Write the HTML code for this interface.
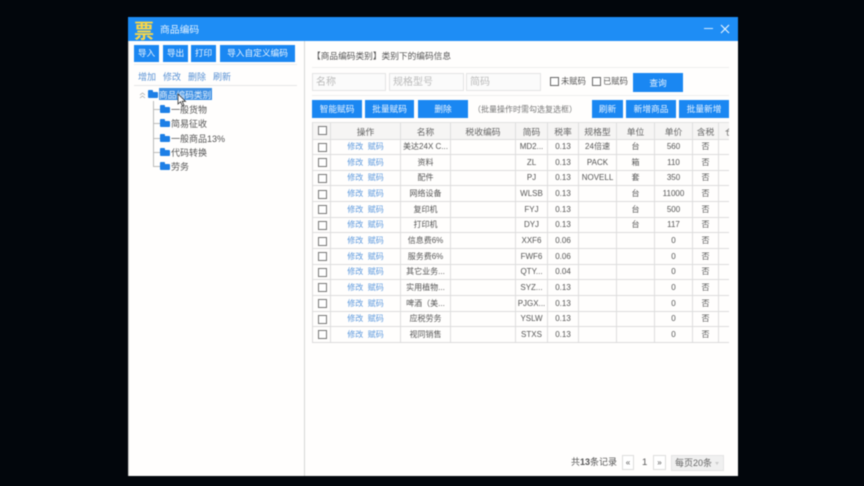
<!DOCTYPE html>
<html lang="zh"><head><meta charset="utf-8"><title>商品编码</title>
<style>
*{box-sizing:border-box}
html,body{margin:0;padding:0;width:864px;height:486px;overflow:hidden;background:#02060c}
body{font-family:"Liberation Sans","Noto Sans CJK SC",sans-serif;font-size:9px;color:#555}
#w{position:absolute;left:128px;top:17px;width:610px;height:459px;background:#fffefd;filter:blur(.45px);overflow:hidden}
.a{position:absolute;white-space:nowrap}
.b{position:absolute;background:#1a87f2;color:#e8f3fe;text-align:center;font-size:8.7px;white-space:nowrap}
.l{color:#5b98dd}
.r{position:absolute;left:184px;width:417px;display:flex;border-bottom:1px solid #dcdcdc;border-left:1px solid #dcdcdc;color:#555;line-height:16px;height:16px}
.r>span{display:block;flex:none;text-align:center;border-right:1px solid #dedede;overflow:hidden;white-space:nowrap;font-size:8px}
.r>span:last-child{border-right:0}
.c1{width:18px}.c2{width:70px}.c3{width:50px}.c4{width:65px}.c5{width:32px}.c6{width:31px}.c7{width:38px}.c8{width:38px}.c9{width:38px}.c10{width:26px}.c11{width:10px}
.cb{display:block;width:9px;height:9px;border:1px solid #777;background:#fff;margin:3.500px 0 0 5px}
.h{background:#f6f5f4;color:#666;height:18px;line-height:18px;border-top:1px solid #e2e2e2}
.h>span{font-size:8.800px}
.h>.c11{text-align:left;padding-left:6px}
.inp{position:absolute;top:56px;height:18px;border:1px solid #e4e4e4;background:#fbfbfb;color:#bbb;font-size:10px;line-height:18px;padding-left:3px}
.t{position:absolute;font-size:9px;color:#555;white-space:nowrap;line-height:13px}
.fd{position:absolute;width:10px;height:6px;background:#1d7fe6;border-radius:1px}
.fd:before{content:"";position:absolute;left:0;top:-2px;width:5px;height:3px;background:#1d7fe6;border-radius:1px 1px 0 0}
.g{position:absolute;background:#bbb}
.sq{position:absolute;width:9px;height:9px;border:1px solid #666;background:#fff}
</style></head><body>
<div id="w">
<div class="a" style="left:0;top:0;width:610px;height:24px;background:#1e8df5"></div>
<div class="a" style="left:6px;top:3px;width:20px;height:20px;color:#f7d64a;font-size:20px;line-height:20px;font-weight:bold;text-align:center;font-family:'Noto Sans CJK SC',sans-serif">票</div>
<div class="a" style="left:32px;top:7px;color:#e4f1fe;font-size:9.800px;line-height:13px">商品编码</div>
<div class="a" style="left:576px;top:11px;width:9px;height:1px;background:#cfe6fd"></div>
<svg class="a" style="left:592px;top:7px" width="10" height="10"><path d="M1 1L9 9M9 1L1 9" stroke="#e6f3fe" stroke-width="1.2"/></svg>
<div class="a" style="left:0;top:24px;width:1px;height:435px;background:#ccc"></div>
<div class="a" style="left:176px;top:24px;width:1px;height:435px;background:#d6d6d6"></div>

<div class="b" style="left:6px;top:28px;width:25px;height:17px;line-height:17px">导入</div>
<div class="b" style="left:35px;top:28px;width:25px;height:17px;line-height:17px">导出</div>
<div class="b" style="left:63px;top:28px;width:25px;height:17px;line-height:17px">打印</div>
<div class="b" style="left:92px;top:28px;width:75px;height:17px;line-height:17px">导入自定义编码</div>
<div class="a" style="left:6px;top:47px;width:163px;height:1px;background:#eee"></div>
<div class="a l" style="left:10px;top:54px;line-height:12px;color:#5a92d4">增加</div>
<div class="a l" style="left:35px;top:54px;line-height:12px;color:#5a92d4">修改</div>
<div class="a l" style="left:60px;top:54px;line-height:12px;color:#5a92d4">删除</div>
<div class="a l" style="left:85px;top:54px;line-height:12px;color:#5a92d4">刷新</div>
<div class="a" style="left:6px;top:68px;width:163px;height:1px;background:#e6e6e6"></div>

<svg class="a" style="left:11px;top:75px" width="7" height="7"><path d="M1 3L3.500 1L6 3M1 6L3.500 4L6 6" fill="none" stroke="#aaa" stroke-width=".8"/></svg>
<div class="fd" style="left:20px;top:75px"></div>
<div class="a" style="left:31px;top:71px;width:53px;height:12px;background:#3d8fe3"></div>
<div class="t" style="left:31px;top:71.500px;color:#e6f1fc;font-size:8.700px">商品编码类别</div>
<svg class="a" style="left:49px;top:76px" width="10" height="14"><path d="M1 1V11L3.500 8.800L5.500 13L7 12.300L5.200 8.300H8.500Z" fill="#fff" stroke="#333" stroke-width=".8"/></svg>
<div class="g" style="left:25px;top:84px;width:1px;height:66px"></div>
<div class="g" style="left:25px;top:92px;width:7px;height:1px"></div>
<div class="g" style="left:25px;top:106px;width:7px;height:1px"></div>
<div class="g" style="left:25px;top:121px;width:7px;height:1px"></div>
<div class="g" style="left:25px;top:135px;width:7px;height:1px"></div>
<div class="g" style="left:25px;top:149px;width:7px;height:1px"></div>
<div class="fd" style="left:32px;top:90px"></div><div class="t" style="left:43px;top:87px">一般货物</div>
<div class="fd" style="left:32px;top:104px"></div><div class="t" style="left:43px;top:101px">简易征收</div>
<div class="fd" style="left:32px;top:119px"></div><div class="t" style="left:43px;top:116px">一般商品13%</div>
<div class="fd" style="left:32px;top:133px"></div><div class="t" style="left:43px;top:130px">代码转换</div>
<div class="fd" style="left:32px;top:147px"></div><div class="t" style="left:43px;top:144px">劳务</div>

<div class="t" style="left:184px;top:33px;font-size:8.700px">【商品编码类别】类别下的编码信息</div>
<div class="a" style="left:184px;top:50px;width:417px;height:1px;background:#eee"></div>
<div class="inp" style="left:184px;width:74px">名称</div>
<div class="inp" style="left:261px;width:75px">规格型号</div>
<div class="inp" style="left:338px;width:75px">简码</div>
<div class="sq" style="left:422px;top:60px"></div><div class="t" style="left:433px;top:58px;font-size:8.300px">未赋码</div>
<div class="sq" style="left:464px;top:60px"></div><div class="t" style="left:475px;top:58px;font-size:8.300px">已赋码</div>
<div class="b" style="left:505px;top:56px;width:50px;height:19px;line-height:20px">查询</div>
<div class="a" style="left:184px;top:78px;width:417px;height:1px;background:#eee"></div>
<div class="b" style="left:184px;top:83px;width:50px;height:18px;line-height:18px">智能赋码</div>
<div class="b" style="left:237px;top:83px;width:49px;height:18px;line-height:18px">批量赋码</div>
<div class="b" style="left:290px;top:83px;width:50px;height:18px;line-height:18px">删除</div>
<div class="t" style="left:345px;top:86px;font-size:8px;color:#777">（批量操作时需勾选复选框）</div>
<div class="b" style="left:464px;top:83px;width:31px;height:18px;line-height:18px">刷新</div>
<div class="b" style="left:498px;top:83px;width:50px;height:18px;line-height:18px">新增商品</div>
<div class="b" style="left:551px;top:83px;width:50px;height:18px;line-height:18px">批量新增</div>

<div class="r h" style="top:105px"><span class="c1"><i class="cb" style="margin-top:3px"></i></span><span class="c2">操作</span><span class="c3">名称</span><span class="c4">税收编码</span><span class="c5">简码</span><span class="c6">税率</span><span class="c7">规格型</span><span class="c8">单位</span><span class="c9">单价</span><span class="c10">含税</span><span class="c11">仓</span></div>
<div class="r" style="top:122px"><span class="c1"><i class="cb"></i></span><span class="c2 l">修改&nbsp;&nbsp;赋码</span><span class="c3">美达24X C...</span><span class="c4"></span><span class="c5">MD2...</span><span class="c6">0.13</span><span class="c7">24倍速</span><span class="c8">台</span><span class="c9">560</span><span class="c10">否</span><span class="c11"></span></div>
<div class="r" style="top:137.700px"><span class="c1"><i class="cb"></i></span><span class="c2 l">修改&nbsp;&nbsp;赋码</span><span class="c3">资料</span><span class="c4"></span><span class="c5">ZL</span><span class="c6">0.13</span><span class="c7">PACK</span><span class="c8">箱</span><span class="c9">110</span><span class="c10">否</span><span class="c11"></span></div>
<div class="r" style="top:153.300px"><span class="c1"><i class="cb"></i></span><span class="c2 l">修改&nbsp;&nbsp;赋码</span><span class="c3">配件</span><span class="c4"></span><span class="c5">PJ</span><span class="c6">0.13</span><span class="c7">NOVELL</span><span class="c8">套</span><span class="c9">350</span><span class="c10">否</span><span class="c11"></span></div>
<div class="r" style="top:169px"><span class="c1"><i class="cb"></i></span><span class="c2 l">修改&nbsp;&nbsp;赋码</span><span class="c3">网络设备</span><span class="c4"></span><span class="c5">WLSB</span><span class="c6">0.13</span><span class="c7"></span><span class="c8">台</span><span class="c9">11000</span><span class="c10">否</span><span class="c11"></span></div>
<div class="r" style="top:184.600px"><span class="c1"><i class="cb"></i></span><span class="c2 l">修改&nbsp;&nbsp;赋码</span><span class="c3">复印机</span><span class="c4"></span><span class="c5">FYJ</span><span class="c6">0.13</span><span class="c7"></span><span class="c8">台</span><span class="c9">500</span><span class="c10">否</span><span class="c11"></span></div>
<div class="r" style="top:200.300px"><span class="c1"><i class="cb"></i></span><span class="c2 l">修改&nbsp;&nbsp;赋码</span><span class="c3">打印机</span><span class="c4"></span><span class="c5">DYJ</span><span class="c6">0.13</span><span class="c7"></span><span class="c8">台</span><span class="c9">117</span><span class="c10">否</span><span class="c11"></span></div>
<div class="r" style="top:216px"><span class="c1"><i class="cb"></i></span><span class="c2 l">修改&nbsp;&nbsp;赋码</span><span class="c3">信息费6%</span><span class="c4"></span><span class="c5">XXF6</span><span class="c6">0.06</span><span class="c7"></span><span class="c8"></span><span class="c9">0</span><span class="c10">否</span><span class="c11"></span></div>
<div class="r" style="top:231.600px"><span class="c1"><i class="cb"></i></span><span class="c2 l">修改&nbsp;&nbsp;赋码</span><span class="c3">服务费6%</span><span class="c4"></span><span class="c5">FWF6</span><span class="c6">0.06</span><span class="c7"></span><span class="c8"></span><span class="c9">0</span><span class="c10">否</span><span class="c11"></span></div>
<div class="r" style="top:247.200px"><span class="c1"><i class="cb"></i></span><span class="c2 l">修改&nbsp;&nbsp;赋码</span><span class="c3">其它业务...</span><span class="c4"></span><span class="c5">QTY...</span><span class="c6">0.04</span><span class="c7"></span><span class="c8"></span><span class="c9">0</span><span class="c10">否</span><span class="c11"></span></div>
<div class="r" style="top:262.900px"><span class="c1"><i class="cb"></i></span><span class="c2 l">修改&nbsp;&nbsp;赋码</span><span class="c3">实用植物...</span><span class="c4"></span><span class="c5">SYZ...</span><span class="c6">0.13</span><span class="c7"></span><span class="c8"></span><span class="c9">0</span><span class="c10">否</span><span class="c11"></span></div>
<div class="r" style="top:278.500px"><span class="c1"><i class="cb"></i></span><span class="c2 l">修改&nbsp;&nbsp;赋码</span><span class="c3">啤酒（美...</span><span class="c4"></span><span class="c5">PJGX...</span><span class="c6">0.13</span><span class="c7"></span><span class="c8"></span><span class="c9">0</span><span class="c10">否</span><span class="c11"></span></div>
<div class="r" style="top:294.100px"><span class="c1"><i class="cb"></i></span><span class="c2 l">修改&nbsp;&nbsp;赋码</span><span class="c3">应税劳务</span><span class="c4"></span><span class="c5">YSLW</span><span class="c6">0.13</span><span class="c7"></span><span class="c8"></span><span class="c9">0</span><span class="c10">否</span><span class="c11"></span></div>
<div class="r" style="top:309.700px"><span class="c1"><i class="cb"></i></span><span class="c2 l">修改&nbsp;&nbsp;赋码</span><span class="c3">视同销售</span><span class="c4"></span><span class="c5">STXS</span><span class="c6">0.13</span><span class="c7"></span><span class="c8"></span><span class="c9">0</span><span class="c10">否</span><span class="c11"></span></div>

<div class="t" style="left:443px;top:439px;font-size:9px">共<b>13</b>条记录</div>
<div class="a" style="left:494px;top:438px;width:12px;height:15px;border:1px solid #ddd;background:#fff;text-align:center;line-height:13px;font-size:8px">«</div>
<div class="t" style="left:514px;top:439px;font-size:9.500px">1</div>
<div class="a" style="left:525px;top:438px;width:13px;height:15px;border:1px solid #ddd;background:#fff;text-align:center;line-height:13px;font-size:8px">»</div>
<div class="a" style="left:543px;top:438px;width:53px;height:16px;background:#f0f0f0;border:1px solid #e4e4e4;line-height:15px;font-size:9px;padding-left:3px;color:#666">每页20条</div>
<div class="a" style="left:587px;top:445px;width:0;height:0;border-left:2.500px solid transparent;border-right:2.500px solid transparent;border-top:3px solid #ccc"></div>
</div>
</body></html>
